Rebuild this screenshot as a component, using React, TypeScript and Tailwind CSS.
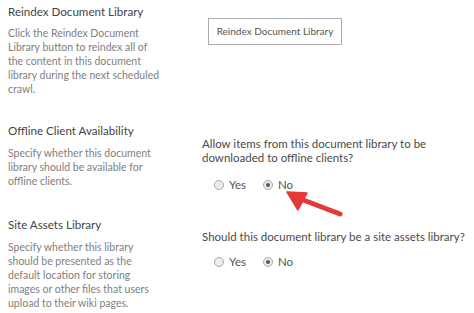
import React from 'react';

type Option = { label: string; checked: boolean };

function Radio({ label, checked }: Option) {
  return (
    <label className="flex items-center gap-[5px]">
      <span className="w-[10px] h-[10px] rounded-full border border-[#a8a8a8] bg-[#ececec] flex items-center justify-center">
        {checked && <span className="w-[4px] h-[4px] rounded-full bg-[#555]" />}
      </span>
      <span className="text-[11.5px] leading-4 text-[#555]">{label}</span>
    </label>
  );
}

function RadioRow({ className }: { className?: string }) {
  return (
    <div className={'flex items-center gap-[17px] pl-3 ' + (className || '')}>
      <Radio label="Yes" checked={false} />
      <Radio label="No" checked={true} />
    </div>
  );
}

function Lines({ lines }: { lines: string[] }) {
  return (
    <p className="text-[10.5px] leading-[14px] text-[#808080] whitespace-nowrap">
      {lines.map((l, i) => (
        <span key={i} className="block">
          {l}
        </span>
      ))}
    </p>
  );
}

export default function App() {
  return (
    <main className="relative w-[474px] h-[313px] overflow-hidden bg-white pl-2 font-['Lato',sans-serif]">
      {/* Reindex */}
      <section className="flex items-start pt-[2px]">
        <div className="w-[194px]">
          <h2 className="text-[11.6px] leading-5 font-normal text-[#444]">Reindex Document Library</h2>
          <div className="mt-1">
            <Lines
              lines={[
                'Click the Reindex Document',
                'Library button to reindex all of',
                'the content in this document',
                'library during the next scheduled',
                'crawl.',
              ]}
            />
          </div>
        </div>
        <div className="pl-[6px] pt-[15px]">
          <button className="w-[134px] h-[27px] border border-[#ababab] bg-white text-[10px] text-[#555] whitespace-nowrap">
            Reindex Document Library
          </button>
        </div>
      </section>

      {/* Offline */}
      <section className="flex items-start mt-[25px]">
        <div className="w-[194px]">
          <h2 className="text-[11.6px] leading-5 font-normal text-[#444]">Offline Client Availability</h2>
          <div className="mt-[5px]">
            <Lines
              lines={[
                'Specify whether this document',
                'library should be available for',
                'offline clients.',
              ]}
            />
          </div>
        </div>
        <div className="pt-4">
          <p className="text-[11.5px] leading-[14px] text-[#4a4a4a] whitespace-nowrap">
            Allow items from this document library to be
            <br />
            downloaded to offline clients?
          </p>
          <RadioRow className="mt-3" />
        </div>
      </section>

      {/* Site assets */}
      <section className="flex items-start mt-[22px]">
        <div className="w-[194px]">
          <h2 className="text-[11.6px] leading-5 font-normal text-[#444]">Site Assets Library</h2>
          <div className="mt-[5px]">
            <Lines
              lines={[
                'Specify whether this library',
                'should be presented as the',
                'default location for storing',
                'images or other files that users',
                'upload to their wiki pages.',
              ]}
            />
          </div>
        </div>
        <div className="pt-[15px]">
          <p className="text-[11.5px] leading-[14px] text-[#4a4a4a] whitespace-nowrap">
            Should this document library be a site assets library?
          </p>
          <RadioRow className="mt-[10px]" />
        </div>
      </section>

      {/* annotation arrow */}
      <svg className="absolute left-0 top-0 pointer-events-none" width="474" height="313" viewBox="0 0 474 313">
        <line x1="340" y1="214" x2="298" y2="198" stroke="#e53935" strokeWidth="5" strokeLinecap="round" />
        <polygon points="287,192 307,193 298,210" fill="#e53935" stroke="#e53935" strokeWidth="1.5" strokeLinejoin="round" />
      </svg>
    </main>
  );
}
